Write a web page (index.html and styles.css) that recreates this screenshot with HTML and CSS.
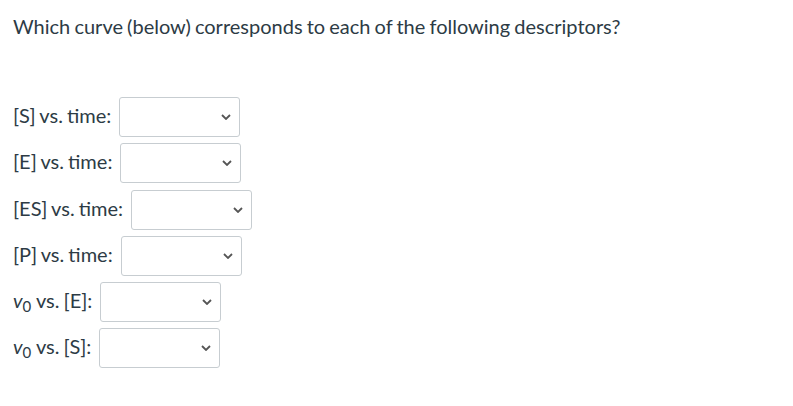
FILE: index.html
```html
<!DOCTYPE html>
<html>
<head>
<meta charset="utf-8">
<link rel="stylesheet" href="styles.css">
</head>
<body>
<div class="page">
  <p class="question">Which curve (below) corresponds to each of the following descriptors?</p>
  <div class="rows">
    <div class="row"><span class="label">[S] vs. time:</span><span class="select"><svg class="chev" viewBox="0 0 10 6" width="10" height="6"><path d="M1 1 L5 5 L9 1" fill="none" stroke="#555" stroke-width="1.8"/></svg></span></div>
    <div class="row"><span class="label">[E] vs. time:</span><span class="select"><svg class="chev" viewBox="0 0 10 6" width="10" height="6"><path d="M1 1 L5 5 L9 1" fill="none" stroke="#555" stroke-width="1.8"/></svg></span></div>
    <div class="row"><span class="label">[ES] vs. time:</span><span class="select"><svg class="chev" viewBox="0 0 10 6" width="10" height="6"><path d="M1 1 L5 5 L9 1" fill="none" stroke="#555" stroke-width="1.8"/></svg></span></div>
    <div class="row"><span class="label">[P] vs. time:</span><span class="select"><svg class="chev" viewBox="0 0 10 6" width="10" height="6"><path d="M1 1 L5 5 L9 1" fill="none" stroke="#555" stroke-width="1.8"/></svg></span></div>
    <div class="row"><span class="label"><em>v</em><sub>0</sub> vs. [E]:</span><span class="select"><svg class="chev" viewBox="0 0 10 6" width="10" height="6"><path d="M1 1 L5 5 L9 1" fill="none" stroke="#555" stroke-width="1.8"/></svg></span></div>
    <div class="row"><span class="label"><em>v</em><sub>0</sub> vs. [S]:</span><span class="select"><svg class="chev" viewBox="0 0 10 6" width="10" height="6"><path d="M1 1 L5 5 L9 1" fill="none" stroke="#555" stroke-width="1.8"/></svg></span></div>
  </div>
</div>
</body>
</html>
```
FILE: styles.css
```css
html, body {
  margin: 0;
  padding: 0;
  background: #fff;
}
.page {
  font-family: Lato, "Open Sans", sans-serif;
  color: #2d3b45;
  font-size: 20px;
  padding: 13px 13px;
  word-spacing: -1px;
}
.question {
  margin: 0 0 58px 0;
  line-height: 26px;
}
.rows {
  display: flex;
  flex-direction: column;
  gap: 6.25px;
}
.row {
  display: flex;
  align-items: center;
  height: 40px;
}
.label {
  margin-right: 8px;
  padding-bottom: 4px;
  white-space: nowrap;
}
.label em {
  font-style: italic;
}
.label sub {
  font-size: 15px;
  vertical-align: -4px;
  line-height: 0;
  margin-right: 1px;
}
.select {
  box-sizing: border-box;
  width: 121px;
  height: 40px;
  border: 1px solid #c7cdd1;
  border-radius: 3px;
  display: flex;
  align-items: center;
  justify-content: flex-end;
  padding-right: 8px;
}
.chev {
  display: block;
}
```
